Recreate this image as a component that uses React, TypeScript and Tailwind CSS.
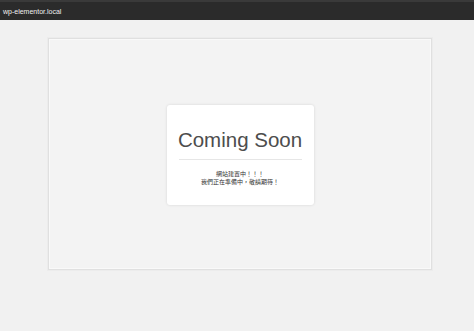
export default function App() {
  return (
    <div className="w-[474px] h-[331px] bg-[#f1f1f1] flex flex-col overflow-hidden" style={{ fontFamily: '"Liberation Sans", Arial, sans-serif' }}>
      <div className="h-[20px] bg-[#2b2b2b] border-t-[2px] border-[#3a3a3a] flex items-center px-[3px] shrink-0">
        <span className="text-[7px] text-[#f0f0f0] leading-none">wp-elementor.local</span>
      </div>
      <div className="pl-[48px] pt-[18px]">
        <div className="w-[384px] h-[232px] border border-[#e0e0e0] bg-[#f3f3f3] shadow-[inset_0_0_0_1px_#f9f9f9,0_0_0_1px_#ececec] flex items-start justify-center">
          <div className="mt-[66px] w-[147px] h-[100px] bg-white rounded-[3px] shadow-[0_0_3px_rgba(0,0,0,0.12)] flex flex-col items-center px-[12px]">
            <div className="mt-[25px] text-[20.5px] leading-none text-[#4d4d4d] whitespace-nowrap">Coming Soon</div>
            <div className="mt-[8px] w-full h-px bg-[#e6e6e6]" />
            <div className="mt-[10px] text-[6px] leading-[8px] text-[#333] text-center" style={{ fontFamily: '"Noto Sans CJK TC", sans-serif' }}>
              <div>網站建置中！！！</div>
              <div>我們正在準備中，敬請期待！</div>
            </div>
          </div>
        </div>
      </div>
    </div>
  );
}
